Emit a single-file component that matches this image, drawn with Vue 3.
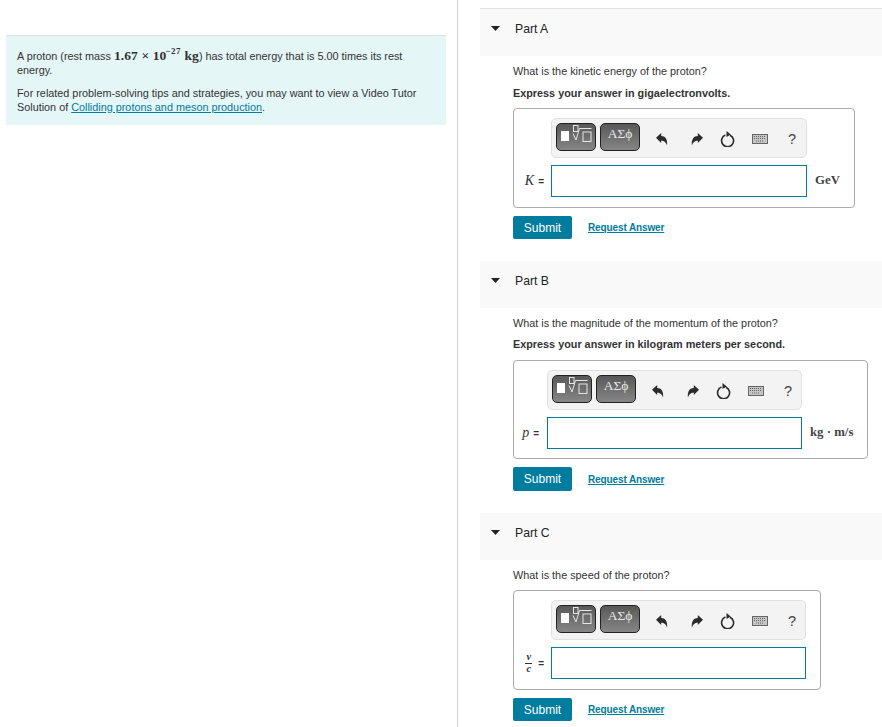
<script setup>
const parts = [
  { name: 'Part A', question: 'What is the kinetic energy of the proton?', hint: 'Express your answer in gigaelectronvolts.', label: 'K', unit: 'GeV', boxWidth: 342, kind: 'a' },
  { name: 'Part B', question: 'What is the magnitude of the momentum of the proton?', hint: 'Express your answer in kilogram meters per second.', label: 'p', unit: 'kg · m/s', boxWidth: 355, kind: 'b' },
  { name: 'Part C', question: 'What is the speed of the proton?', hint: '', label: '', unit: '', boxWidth: 308, kind: 'c' }
]
</script>

<template>
  <div class="page">
    <aside class="left">
      <div class="intro">
        <p>A proton (rest mass <span class="math">1.67 × 10<sup>−27</sup> kg</span>) has total energy that is 5.00 times its rest energy.</p>
        <p class="para-two">For related problem-solving tips and strategies, you may want to view a Video Tutor Solution of <a class="link">Colliding protons and meson production</a>.</p>
      </div>
    </aside>
    <main class="right">
      <section v-for="part in parts" :key="part.name" class="part" :class="part.kind">
        <header class="part-head">
          <svg class="caret" width="9" height="5" viewBox="0 0 9 5"><path d="M0 0h9L4.500 5z" fill="#222" /></svg>
          <span>{{ part.name }}</span>
        </header>
        <div class="body">
          <p class="question">{{ part.question }}</p>
          <p v-if="part.hint" class="hint">{{ part.hint }}</p>
          <div class="box" :style="{ width: part.boxWidth + 'px' }">
            <div class="tool-row">
              <div class="toolbar">
                <div class="tbtn btn-template">
                  <span class="block"></span>
                  <svg class="radical" width="20" height="18" viewBox="0 0 20 18" fill="none" stroke="#e6e6e6" stroke-width="1">
                    <rect x="1.500" y="1.500" width="4.500" height="6" />
                    <path d="M1 9.500l3 6.500 3.500-11.500H19.500" />
                    <rect x="11" y="8" width="8" height="9.500" />
                  </svg>
                </div>
                <div class="tbtn btn-greek">ΑΣϕ</div>
                <div class="icons">
                  <svg width="12" height="13" viewBox="0 0 12 13"><path d="M0 4.700L5.200 0v2.900c3.900.1 6.500 3 5.900 9.600-.9-3-2.800-4.900-5.900-5v2.600z" fill="#2b2b2b" /></svg>
                  <svg width="12" height="13" viewBox="0 0 12 13"><path d="M12 4.700L6.800 0v2.900C2.900 3 .3 5.900.9 12.500c.9-3 2.800-4.900 5.900-5v2.600z" fill="#2b2b2b" /></svg>
                  <svg width="15" height="16" viewBox="0 0 15 16" fill="none"><path d="M10 4.200a6 6 0 1 1-4.600-.1" stroke="#2b2b2b" stroke-width="1.600" /><path d="M6.500 0l4.300 3.600-4.300 2.400z" fill="#2b2b2b" /></svg>
                  <svg width="16" height="10" viewBox="0 0 16 10"><rect x=".5" y=".5" width="15" height="9" fill="#c4c4c4" stroke="#666" /><path d="M2 2.500h12M2 4.500h12M4 7h8" stroke="#666" stroke-width="1" stroke-dasharray="1 1" /></svg>
                  <span class="qmark">?</span>
                </div>
              </div>
            </div>
            <div class="answer-row">
              <div class="label">
                <span v-if="part.kind === 'c'" class="fraction"><i>v</i><i>c</i></span>
                <i v-else class="var">{{ part.label }}</i>
                <span class="eq">=</span>
              </div>
              <div class="input"></div>
              <span v-if="part.unit" class="unit">{{ part.unit }}</span>
            </div>
          </div>
          <div class="actions">
            <button class="submit" type="button">Submit</button>
            <a class="request">Request Answer</a>
          </div>
        </div>
      </section>
    </main>
  </div>
</template>

<style scoped>
.page {
  display: flex;
  width: 882px;
  height: 727px;
  overflow: hidden;
  background: #fff;
  color: #333;
  font-family: "Liberation Sans", Arial, sans-serif;
  font-size: 10.830px;
}
p { margin: 0; }
.left {
  flex: none;
  width: 458px;
  height: 727px;
  box-sizing: border-box;
  border-right: 1px solid #ccd3da;
  padding-top: 35px;
}
.intro {
  width: 440px;
  height: 90px;
  margin-left: 6px;
  box-sizing: border-box;
  background: #e5f6f7;
  border-top: 1px solid #dfe3e6;
  padding: 13px 11px 0;
  line-height: 14px;
}
.para-two { margin-top: 9px; }
.math {
  font-family: "Liberation Serif", serif;
  font-size: 13.500px;
  font-weight: 700;
  color: #333;
  letter-spacing: 0.100px;
}
.math sup { font-size: 9px; line-height: 0; vertical-align: 6px; letter-spacing: 0.500px; margin-left: -1px; }
.link { color: #007c9e; text-decoration: underline; }
.right {
  flex: 1;
  padding: 8px 0 0 22px;
}
.part-head {
  height: 47px;
  display: flex;
  align-items: center;
  background: #f9f9f9;
  font-size: 12.200px;
  color: #222;
  padding-bottom: 8px;
  padding-left: 11px;
  box-sizing: border-box;
  gap: 15px;
}
.part.a .part-head { border-top: 1px solid #e2e2e2; height: 48px; }
.caret { flex: none; }
.body { padding: 8px 0 0 33px; }
.question { line-height: 14px; height: 14px; }
.hint { font-weight: 700; line-height: 14px; margin-top: 8px; }
.part.b .hint { margin-top: 7px; }
.box {
  margin-top: 8px;
  box-sizing: border-box;
  border: 1px solid #aaa;
  border-radius: 4px;
  background: #fff;
  height: 100px;
  padding-top: 9px;
}
.part.b .box { margin-top: 9px; height: 99px; }
.tool-row { padding-left: 37px; }
.part.b .tool-row { padding-left: 33px; }
.toolbar {
  width: 256px;
  height: 40px;
  box-sizing: border-box;
  background: #f3f3f3;
  border: 1px solid #e1e1e1;
  border-radius: 5px;
  display: flex;
  align-items: flex-start;
  padding: 4px 0 0 4px;
  gap: 4px;
}
.part.b .toolbar, .part.c .toolbar, .part.b .input, .part.c .input { width: 255px; }
.tbtn {
  width: 40px;
  height: 28px;
  box-sizing: border-box;
  border: 1px solid #222;
  border-radius: 5px;
  background: linear-gradient(#585858, #868686);
  color: #e8e8e8;
  display: flex;
  align-items: center;
  flex: none;
}
.btn-template { gap: 3px; padding-left: 4px; }
.block { width: 8px; height: 10px; background: #fff; margin-bottom: 2px; flex: none; }
.radical { margin-bottom: 8px; flex: none; }
.btn-greek {
  justify-content: center;
  font-family: "Liberation Serif", serif;
  font-size: 13.500px;
  align-items: flex-start;
  padding-top: 2px;
}
.icons {
  flex: 1;
  display: grid;
  grid-template-columns: 34px 36px 24px 42px 22px;
  align-items: center;
  justify-items: center;
  margin-left: 1px;
  margin-top: 8px;
  height: 16px;
}
.qmark { font-size: 14.500px; color: #444; line-height: 14px; }
.answer-row {
  display: flex;
  align-items: center;
  margin-top: 7px;
}
.label {
  width: 37px;
  flex: none;
  display: flex;
  justify-content: flex-end;
  align-items: center;
  gap: 4px;
  padding-right: 7px;
  box-sizing: border-box;
  font-family: "Liberation Serif", serif;
  font-size: 14px;
}
.part.b .label { width: 33px; padding-right: 8px; }
.var { font-weight: 400; }
.eq { font-family: "Liberation Sans", sans-serif; font-size: 10px; font-weight: 700; }
.fraction {
  display: inline-flex;
  flex-direction: column;
  align-items: center;
  font-size: 10.500px;
  line-height: 10px;
  font-weight: 700;
  margin-right: 2px;
}
.fraction i:first-child { border-bottom: 1px solid #333; padding: 0 1px 1px; line-height: 10px; }
.input {
  width: 256px;
  height: 32px;
  box-sizing: border-box;
  border: 1px solid #007c9e;
  background: #fff;
  flex: none;
}
.unit {
  margin-left: 8px;
  margin-bottom: 2px;
  font-family: "Liberation Serif", serif;
  font-size: 12.800px;
  font-weight: 700;
  white-space: nowrap;
  color: #444;
}
.actions {
  display: flex;
  align-items: center;
  margin-top: 8px;
  gap: 16px;
}
.submit {
  width: 59px;
  height: 23px;
  padding: 0;
  border: 0;
  border-radius: 2px;
  background: #007c9e;
  color: #fff;
  font-family: "Liberation Sans", sans-serif;
  font-size: 12px;
}
.part.b .submit { height: 24px; }
.request {
  color: #007c9e;
  font-size: 10px;
  font-weight: 700;
  text-decoration: underline;
  letter-spacing: -0.120px;
}
.part { padding-bottom: 22px; }
</style>
